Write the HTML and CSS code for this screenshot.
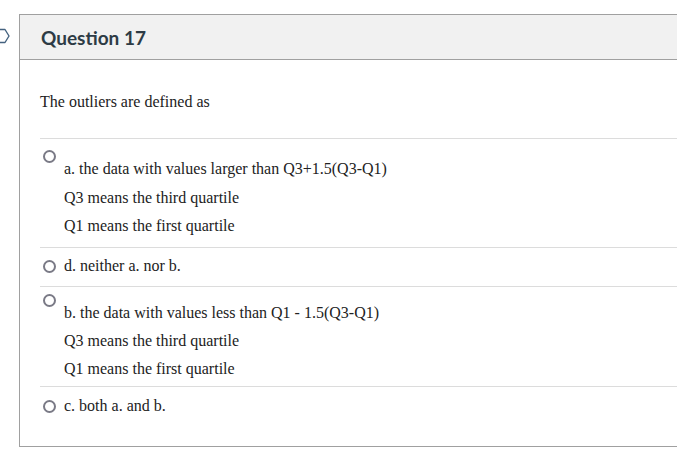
FILE: index.html
```html
<!DOCTYPE html>
<html>
<head>
<meta charset="utf-8">
<link rel="stylesheet" href="styles.css">
</head>
<body>
<div class="question">
  <div class="flag-col">
    <svg class="flag" width="10" height="16" viewBox="0 0 10 16"><path d="M-2 1.5 H5 L9 8 L5 14.5 H-2" fill="none" stroke="#44627f" stroke-width="1.4" stroke-linejoin="round"/></svg>
  </div>
  <div class="card">
    <div class="card-header"><h2 class="title">Question 17</h2></div>
    <div class="card-body">
      <p class="prompt">The outliers are defined as</p>
      <div class="answers">
        <div class="answer answer-multi answer-first">
          <span class="radio"></span>
          <div class="answer-text">
            <p>a. the data with values larger than Q3+1.5(Q3-Q1)</p>
            <p>Q3 means the third quartile</p>
            <p>Q1 means the first quartile</p>
          </div>
        </div>
        <div class="answer answer-single">
          <span class="radio"></span>
          <div class="answer-text"><p>d. neither a. nor b.</p></div>
        </div>
        <div class="answer answer-multi">
          <span class="radio"></span>
          <div class="answer-text">
            <p>b. the data with values less than Q1 - 1.5(Q3-Q1)</p>
            <p>Q3 means the third quartile</p>
            <p>Q1 means the first quartile</p>
          </div>
        </div>
        <div class="answer answer-single answer-last">
          <span class="radio"></span>
          <div class="answer-text"><p>c. both a. and b.</p></div>
        </div>
      </div>
    </div>
  </div>
</div>
</body>
</html>
```
FILE: styles.css
```css
html, body {
  margin: 0;
  padding: 0;
  background: #fff;
  overflow: hidden;
}
body {
  font-family: "Liberation Serif", "Times New Roman", serif;
  color: #222;
}
.question {
  display: flex;
  padding-top: 14px;
}
.flag-col {
  flex: none;
  width: 19px;
  padding-top: 14px;
}
.flag {
  display: block;
}
.card {
  flex: 1;
  min-width: 0;
  border-top: 1px solid #a0a0a0;
  border-left: 1px solid #a0a0a0;
  border-bottom: 1px solid #a0a0a0;
}
.card-header {
  height: 44px;
  background: #f1f1f1;
  border-bottom: 1px solid #a0a0a0;
  display: flex;
  align-items: center;
  padding-left: 21px;
}
.title {
  margin: 0;
  font-family: Lato, "Noto Sans", sans-serif;
  font-weight: 700;
  font-size: 19px;
  color: #2d3b45;
  padding-top: 1px;
}
.card-body {
  padding: 32px 0 30px 20px;
}
.prompt {
  margin: 0 0 26px;
  font-size: 16px;
  line-height: 20px;
}
.answer {
  display: flex;
  border-top: 1px solid #dcdcdc;
  padding-left: 3px;
}
.answer-multi {
  align-items: flex-start;
  padding-top: 7px;
  padding-bottom: 7px;
}
.answer-first {
  padding-top: 11px;
  padding-bottom: 11px;
}
.answer-single {
  align-items: center;
  padding-top: 8px;
  padding-bottom: 10px;
}
.answer-last {
  padding-top: 9px;
  padding-bottom: 0;
}
.radio {
  flex: none;
  box-sizing: border-box;
  width: 13px;
  height: 13px;
  border: 2px solid #7a7a86;
  border-radius: 50%;
  margin-right: 8px;
  background: #fff;
}
.answer-multi .answer-text {
  padding-top: 9px;
}
.answer-text p {
  margin: 0 0 8px;
  font-size: 16px;
  line-height: 20px;
}
.answer-first .answer-text p {
  margin-bottom: 8.5px;
}
.answer-text p:last-child {
  margin-bottom: 0;
}
```
